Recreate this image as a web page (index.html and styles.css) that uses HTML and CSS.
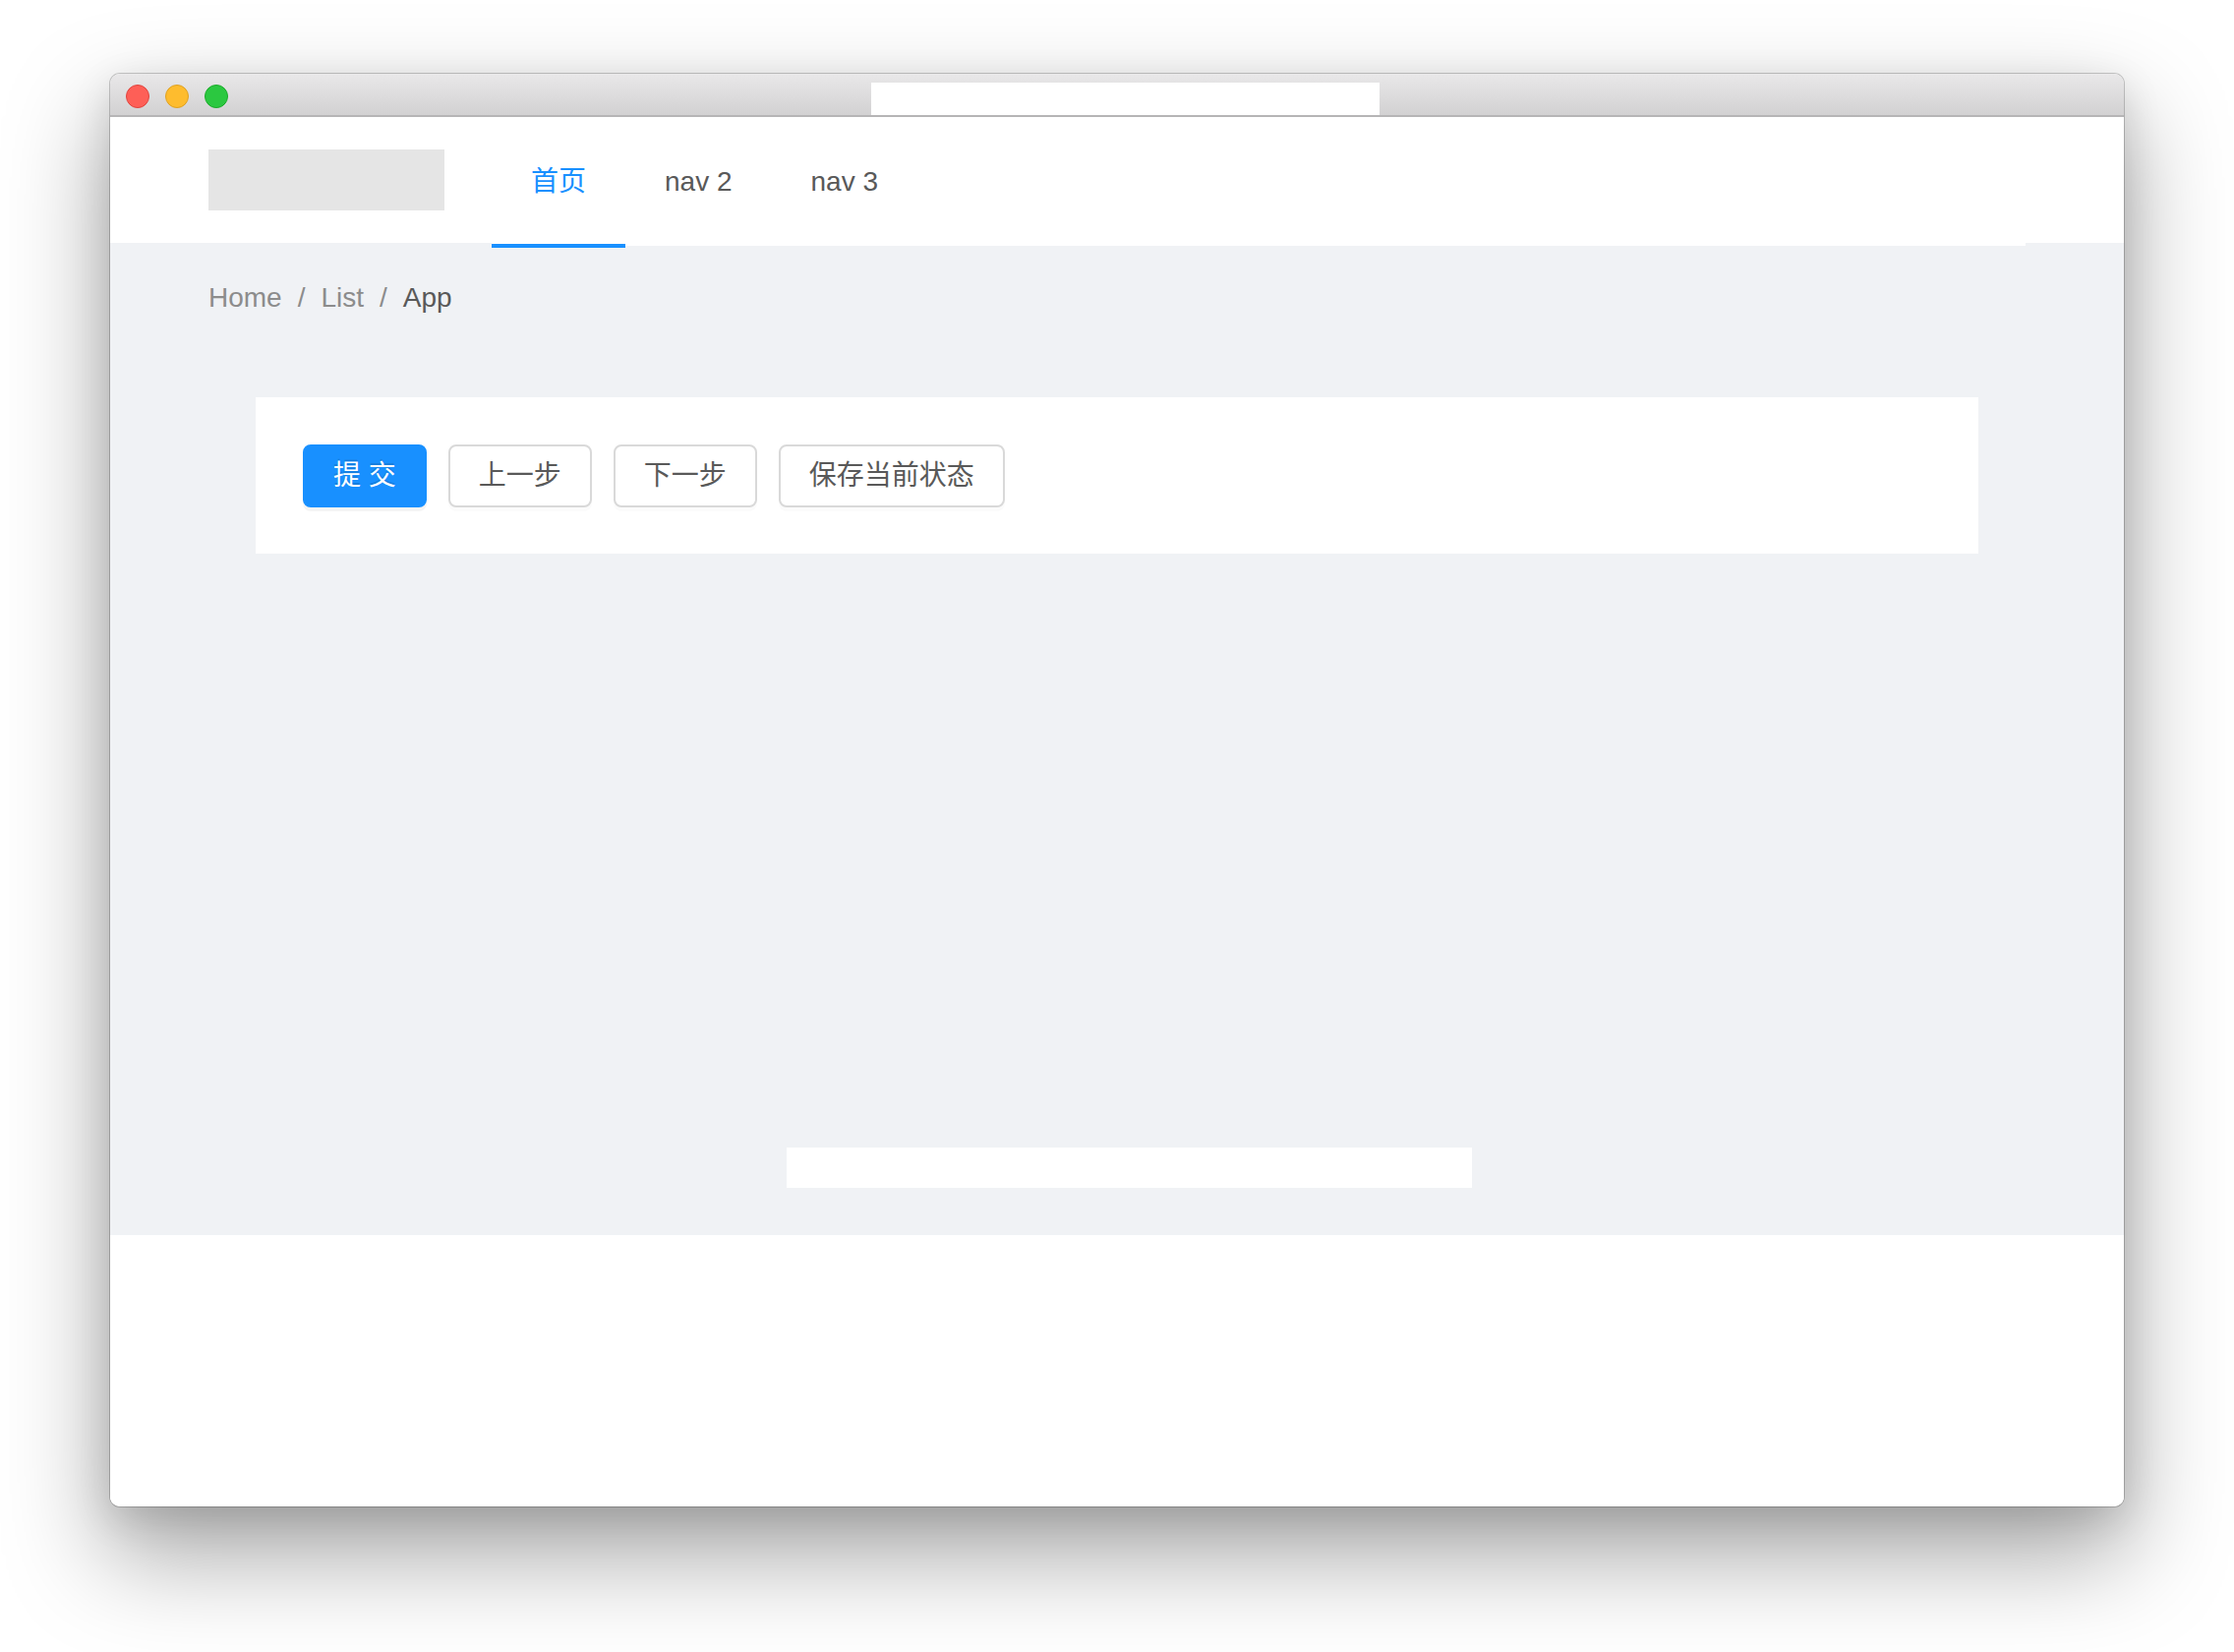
FILE: index.html
```html
<!DOCTYPE html>
<html lang="zh-CN">
<head>
<meta charset="utf-8">
<title>App</title>
<link rel="stylesheet" href="styles.css">
</head>
<body>
<div class="window">
  <div class="titlebar">
    <div class="lights">
      <span class="light light-red"></span>
      <span class="light light-yellow"></span>
      <span class="light light-green"></span>
    </div>
    <div class="address"></div>
  </div>
  <div class="app">
    <header class="header">
      <div class="logo"></div>
      <ul class="menu">
        <li class="menu-item menu-item-active">首页</li>
        <li class="menu-item">nav 2</li>
        <li class="menu-item">nav 3</li>
      </ul>
    </header>
    <main class="content">
      <nav class="breadcrumb">
        <span class="crumb">Home</span><span class="sep">/</span><span class="crumb">List</span><span class="sep">/</span><span class="crumb crumb-last">App</span>
      </nav>
      <div class="card">
        <button class="btn btn-primary">提 交</button>
        <button class="btn">上一步</button>
        <button class="btn">下一步</button>
        <button class="btn">保存当前状态</button>
      </div>
      <div class="footer"><div class="footer-bar"></div></div>
    </main>
    <div class="blank"></div>
  </div>
</div>
</body>
</html>
```

FILE: styles.css
```css
* { box-sizing: border-box; }

html, body {
  margin: 0;
  padding: 0;
  background: #ffffff;
}

body {
  padding: 75px 0 0 112px;
  font-family: "Liberation Sans", "Noto Sans CJK SC", sans-serif;
  width: 2272px;
  height: 1680px;
  overflow: hidden;
}

.window {
  width: 2048px;
  height: 1457px;
  border-radius: 10px;
  overflow: hidden;
  display: flex;
  flex-direction: column;
  background: #ffffff;
  box-shadow:
    0 0 0 1px rgba(0, 0, 0, 0.2),
    0 46px 100px 6px rgba(0, 0, 0, 0.34),
    0 12px 40px rgba(0, 0, 0, 0.12);
}

/* ---------- title bar ---------- */
.titlebar {
  height: 44px;
  flex: none;
  display: flex;
  align-items: flex-start;
  padding-left: 16px;
  background: linear-gradient(#e9e8e9, #d2d1d2);
  border-bottom: 2px solid #b6b5b6;
}

.lights {
  display: flex;
  gap: 16px;
  margin-top: 11px;
}

.light {
  width: 24px;
  height: 24px;
  border-radius: 50%;
  display: block;
}

.light-red { background: #fe5f57; border: 1px solid #e0443e; }
.light-yellow { background: #febc2e; border: 1px solid #dea123; }
.light-green { background: #2bc840; border: 1px solid #1aab29; }

.address {
  margin-left: 654px;
  margin-top: 9px;
  width: 517px;
  height: 33px;
  background: #ffffff;
}

/* ---------- app ---------- */
.app {
  flex: 1;
  display: flex;
  flex-direction: column;
}

.header {
  position: relative;
  z-index: 1;
  height: 128px;
  flex: none;
  display: flex;
  align-items: flex-start;
  padding: 0 100px;
  background: #ffffff;
}

.logo {
  width: 240px;
  height: 62px;
  margin: 33px 48px 0 0;
  background: #e5e5e5;
  flex: none;
}

.menu {
  flex: 1;
  display: flex;
  height: 131px;
  margin: 0;
  padding: 0;
  list-style: none;
  background: #ffffff;
}

.menu-item {
  height: 133px;
  padding: 2px 40px 0;
  line-height: 127px;
  font-size: 28px;
  color: #595959;
  border-bottom: 4px solid transparent;
  white-space: nowrap;
}

.menu-item-active {
  color: #1890ff;
  border-bottom-color: #1890ff;
}

/* ---------- content ---------- */
.content {
  flex: none;
  height: 1009px;
  display: flex;
  flex-direction: column;
  padding: 0 100px;
  background: #f0f2f5;
}

.breadcrumb {
  margin-top: 35px;
  height: 42px;
  line-height: 42px;
  font-size: 28px;
  color: #8c8c8c;
}

.sep {
  margin: 0 16px;
  color: #8c8c8c;
}

.crumb-last {
  color: #595959;
}

.card {
  margin: 80px 48px 0;
  padding: 48px 48px 47px;
  background: #ffffff;
  display: flex;
  gap: 22px;
}

.btn {
  height: 64px;
  padding: 0 29px;
  font-family: "Liberation Sans", "Noto Sans CJK SC", sans-serif;
  font-size: 28px;
  line-height: 60px;
  color: #595959;
  background: #ffffff;
  border: 2px solid #d9d9d9;
  border-radius: 8px;
  box-shadow: 0 4px 0 rgba(0, 0, 0, 0.015);
  white-space: nowrap;
}

.btn-primary {
  color: #ffffff;
  background: #1890ff;
  border-color: #1890ff;
  text-shadow: 0 -2px 0 rgba(0, 0, 0, 0.12);
  box-shadow: 0 4px 0 rgba(0, 0, 0, 0.045);
}

.footer {
  flex: 1;
  display: flex;
  align-items: flex-end;
  padding: 0 0 48px 588px;
}

.footer-bar {
  width: 697px;
  height: 41px;
  background: #ffffff;
}

.blank {
  flex: 1;
  background: #ffffff;
}
```
